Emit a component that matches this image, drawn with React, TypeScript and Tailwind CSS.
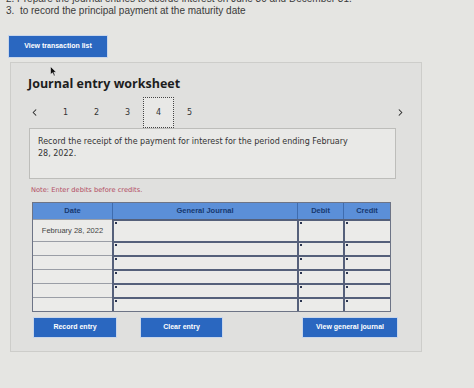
import React from 'react'
import { ChevronLeft, ChevronRight } from 'lucide-react'

const ROWS = [
  { date: 'February 28, 2022', first: true },
  { date: '' },
  { date: '' },
  { date: '' },
  { date: '' },
  { date: '' },
]

function Cursor() {
  return (
    <svg width="7" height="11" viewBox="0 0 7 11" className="absolute left-[50px] top-[66px]">
      <path d="M0.5 0.5 L0.5 8.5 L2.5 6.8 L4 10 L5.2 9.4 L3.8 6.3 L6.3 6.2 Z" fill="#111" stroke="#fff" strokeWidth="0.5" />
    </svg>
  )
}

function BlueButton({ label, className }: { label: string; className?: string }) {
  return (
    <button
      className={
        'h-[19px] bg-[#2a67c0] text-white font-bold text-[7px] flex items-center justify-center shadow-[0_0_0_1px_#c9d6ea] ' +
        (className ?? '')
      }
    >
      {label}
    </button>
  )
}

function InputCell({ first }: { first?: boolean }) {
  return (
    <div className={(first ? 'h-[22px] ' : 'h-[14px] ') + 'relative bg-[#ebebe9] border-t-2 border-l-2 border-[#55607a]'}>
      <span className="absolute left-[1px] top-[1px] w-[2px] h-[2px] bg-[#2b3550]" />
    </div>
  )
}

export default function App() {
  return (
    <div className="relative w-[474px] h-[388px] overflow-hidden bg-[#e5e5e2] font-['Liberation_Sans',Arial,sans-serif] text-[#333]">
      {/* question text */}
      <div className="pl-[6px] -mt-[7px] text-[10px] leading-[12px] text-[#3a3a3a]">
        <p className="whitespace-nowrap">2. Prepare the journal entries to accrue interest on June 30 and December 31.</p>
        <p>3.&nbsp; to record the principal payment at the maturity date</p>
      </div>

      <button className="ml-[9px] mt-[19px] w-[98px] h-[21px] bg-[#2a67c0] text-white font-bold text-[7px] flex items-center justify-center shadow-[0_0_0_1px_#c9d6ea]">
        View transaction list
      </button>

      <Cursor />

      {/* worksheet panel */}
      <div className="ml-[10px] mt-[5px] w-[412px] h-[290px] border border-[#cdcdca] bg-[#e0e0de]">
        <h2 className="pl-[17px] pt-[13px] text-[12.5px] leading-[16px] font-bold text-[#1d1d1d] font-['Open_Sans',sans-serif]">
          Journal entry worksheet
        </h2>

        <div className="mt-[5px] h-[31px] flex items-center text-[8px] text-[#333] font-['DejaVu_Sans',Verdana,sans-serif]">
          <ChevronLeft size={11} strokeWidth={2.2} className="ml-[18px] mr-[10px] text-[#222]" />
          {[1, 2, 3, 4, 5].map(n => (
            <div
              key={n}
              className={
                n === 4
                  ? 'w-[31px] h-[31px] flex items-center justify-center border border-dotted border-[#444] bg-[#e8e8e6]'
                  : 'w-[31px] h-[31px] flex items-center justify-center'
              }
            >
              {n}
            </div>
          ))}
          <ChevronRight size={11} strokeWidth={2.2} className="ml-auto mr-[15px] text-[#222]" />
        </div>

        <div className="ml-[18px] w-[367px] h-[51px] border border-[#bdbdba] bg-[#e9e9e7] pl-[8px] pt-[7px] text-[8px] leading-[12px] text-[#333] font-['DejaVu_Sans',Verdana,sans-serif]">
          <p>Record the receipt of the payment for interest for the period ending February</p>
          <p>28, 2022.</p>
        </div>

        <p className="mt-[6px] pl-[20px] text-[6.7px] leading-[10px] text-[#b34d63] font-['DejaVu_Sans',Verdana,sans-serif]">
          Note: Enter debits before credits.
        </p>

        {/* journal table */}
        <div className="mt-[7px] ml-[21px] w-[359px] grid grid-cols-[79px_185px_46px_47px] border border-[#6d7486]">
          <div className="h-[16px] bg-[#5b8fd8] flex items-center justify-center text-[7.5px] font-bold text-[#17386f]">Date</div>
          <div className="h-[16px] bg-[#5b8fd8] border-l border-[#3f6cae] flex items-center justify-center text-[7.5px] font-bold text-[#17386f]">General Journal</div>
          <div className="h-[16px] bg-[#5b8fd8] border-l border-[#3f6cae] flex items-center justify-center text-[7.5px] font-bold text-[#17386f]">Debit</div>
          <div className="h-[16px] bg-[#5b8fd8] border-l border-[#3f6cae] flex items-center justify-center text-[7.5px] font-bold text-[#17386f]">Credit</div>
          {ROWS.map((r, i) => (
            <React.Fragment key={i}>
              <div
                className={
                  (r.first ? 'h-[22px] ' : 'h-[14px] ') +
                  'bg-[#ebebe9] border-t border-[#9a9ea6] flex items-center justify-center text-[7.5px] text-[#444]'
                }
              >
                {r.date}
              </div>
              <InputCell first={r.first} />
              <InputCell first={r.first} />
              <InputCell first={r.first} />
            </React.Fragment>
          ))}
        </div>

        <div className="mt-[6px] flex">
          <BlueButton label="Record entry" className="ml-[23px] w-[82px]" />
          <BlueButton label="Clear entry" className="ml-[25px] w-[81px]" />
          <BlueButton label="View general journal" className="ml-[81px] w-[94px]" />
        </div>
      </div>
    </div>
  )
}
